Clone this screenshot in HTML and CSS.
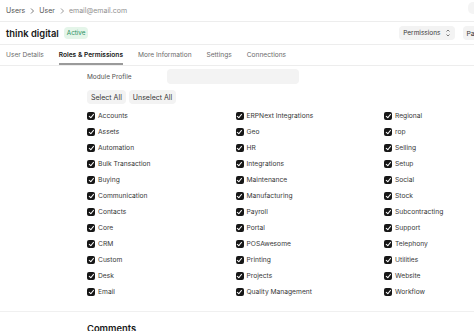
FILE: index.html
```html
<!DOCTYPE html>
<html>
<head>
<meta charset="utf-8">
<link rel="stylesheet" href="styles.css">
</head>
<body>
<div class="page">
<div class="topbar">
  <nav class="crumbs">
    <span class="crumb">Users</span>
    <svg class="chev" viewBox="0 0 6 8"><path d="M2 1.5 L4.5 4 L2 6.5" fill="none" stroke="#7c7c7c" stroke-width="1"/></svg>
    <span class="crumb">User</span>
    <svg class="chev" viewBox="0 0 6 8"><path d="M2 1.5 L4.5 4 L2 6.5" fill="none" stroke="#9a9a9a" stroke-width="1"/></svg>
    <span class="crumb light">email@email.com</span>
  </nav>
  <div class="top-pill"></div>
</div>
<div class="titlebar">
  <h1 class="title">think digital</h1>
  <span class="badge">Active</span>
  <div class="spacer"></div>
  <button class="btn">Permissions <svg class="updown" viewBox="0 0 6 10"><path d="M1.5 3.5 L3 2 L4.5 3.5 M1.5 6.5 L3 8 L4.5 6.5" fill="none" stroke="#6b6b6b" stroke-width="0.9"/></svg></button>
  <button class="btn">Password</button>
</div>
<div class="tabs">
  <span class="tab">User Details</span>
  <span class="tab active">Roles &amp; Permissions</span>
  <span class="tab">More Information</span>
  <span class="tab">Settings</span>
  <span class="tab">Connections</span>
</div>
<main class="content">
  <div class="field">
    <span class="label">Module Profile</span>
    <div class="input"></div>
  </div>
  <div class="actions">
    <button class="btn small">Select All</button>
    <button class="btn small">Unselect All</button>
  </div>
  <div class="grid">
    <div class="col">
      <label class="item"><span class="cb"></span>Accounts</label>
      <label class="item"><span class="cb"></span>Assets</label>
      <label class="item"><span class="cb"></span>Automation</label>
      <label class="item"><span class="cb"></span>Bulk Transaction</label>
      <label class="item"><span class="cb"></span>Buying</label>
      <label class="item"><span class="cb"></span>Communication</label>
      <label class="item"><span class="cb"></span>Contacts</label>
      <label class="item"><span class="cb"></span>Core</label>
      <label class="item"><span class="cb"></span>CRM</label>
      <label class="item"><span class="cb"></span>Custom</label>
      <label class="item"><span class="cb"></span>Desk</label>
      <label class="item"><span class="cb"></span>Email</label>
    </div>
    <div class="col">
      <label class="item"><span class="cb"></span>ERPNext Integrations</label>
      <label class="item"><span class="cb"></span>Geo</label>
      <label class="item"><span class="cb"></span>HR</label>
      <label class="item"><span class="cb"></span>Integrations</label>
      <label class="item"><span class="cb"></span>Maintenance</label>
      <label class="item"><span class="cb"></span>Manufacturing</label>
      <label class="item"><span class="cb"></span>Payroll</label>
      <label class="item"><span class="cb"></span>Portal</label>
      <label class="item"><span class="cb"></span>POSAwesome</label>
      <label class="item"><span class="cb"></span>Printing</label>
      <label class="item"><span class="cb"></span>Projects</label>
      <label class="item"><span class="cb"></span>Quality Management</label>
    </div>
    <div class="col">
      <label class="item"><span class="cb"></span>Regional</label>
      <label class="item"><span class="cb"></span>rop</label>
      <label class="item"><span class="cb"></span>Selling</label>
      <label class="item"><span class="cb"></span>Setup</label>
      <label class="item"><span class="cb"></span>Social</label>
      <label class="item"><span class="cb"></span>Stock</label>
      <label class="item"><span class="cb"></span>Subcontracting</label>
      <label class="item"><span class="cb"></span>Support</label>
      <label class="item"><span class="cb"></span>Telephony</label>
      <label class="item"><span class="cb"></span>Utilities</label>
      <label class="item"><span class="cb"></span>Website</label>
      <label class="item"><span class="cb"></span>Workflow</label>
    </div>
  </div>
</main>
<section class="comments">
  <h2 class="comments-title">Comments</h2>
</section>
</div>
</body>
</html>
```
FILE: styles.css
```css
* { box-sizing: border-box; }
html, body { margin: 0; padding: 0; }
body {
  width: 474px;
  height: 331px;
  overflow: hidden;
  background: #fff;
  font-family: Inter, "Noto Sans", sans-serif;
  color: #383838;
}
.page {
  width: 510px;
}
.topbar {
  height: 22px;
  display: flex;
  align-items: center;
  padding: 0 0 0 6px;
  border-bottom: 1px solid #ededed;
}
.crumbs {
  display: flex;
  align-items: center;
  gap: 3px;
  font-size: 7px;
  flex: 1;
}
.crumb { color: #525252; }
.crumb.light { color: #8f8f8f; }
.chev { width: 6px; height: 8px; margin: 0 1px; }
.top-pill {
  width: 30px;
  height: 12px;
  border-radius: 5px;
  background: #f4f4f4;
  margin-right: 12px;
  align-self: flex-start;
  margin-top: 2px;
}
.titlebar {
  height: 23px;
  display: flex;
  align-items: center;
  padding-left: 6px;
  border-bottom: 1px solid #ededed;
}
.title {
  margin: 0;
  font-size: 9.4px;
  font-weight: 600;
  color: #171717;
}
.badge {
  margin-left: 5px;
  font-size: 6.3px;
  background: #e4f5e9;
  color: #278f5e;
  padding: 2px 3px;
  border-radius: 4px;
}
.spacer { flex: 1; }
.btn {
  font-family: inherit;
  border: none;
  background: #f3f3f3;
  color: #383838;
  font-size: 6.8px;
  border-radius: 4px;
  height: 14px;
  padding: 0 4px;
  display: inline-flex;
  align-items: center;
  gap: 4px;
  white-space: nowrap;
}
.titlebar .btn { margin-right: 8px; flex-shrink: 0; }
.titlebar .btn:first-of-type { font-size: 6.5px; }
.updown { width: 6px; height: 10px; }
.tabs {
  height: 21px;
  display: flex;
  align-items: stretch;
  padding-left: 6px;
  gap: 15px;
  border-bottom: 1px solid #ededed;
  font-size: 6.6px;
}
.tab {
  display: flex;
  align-items: center;
  color: #6b6b6b;
  border-bottom: 2px solid transparent;
  padding-top: 1px;
}
.tab.active {
  color: #171717;
  font-weight: 600;
  border-bottom-color: #9a9a9a;
}
.content {
  padding: 3px 0 0 87px;
}
.field {
  display: flex;
  align-items: center;
  height: 15px;
}
.label {
  width: 80px;
  font-size: 6.5px;
  color: #525252;
}
.input {
  width: 132px;
  height: 15px;
  background: #f3f3f3;
  border-radius: 4px;
}
.actions {
  display: flex;
  gap: 3px;
  margin-top: 6px;
}
.btn.small { height: 14px; padding: 0 4px; font-size: 7px; }
.grid {
  display: grid;
  grid-template-columns: 148.5px 148.5px 148.5px;
  margin-top: 4px;
}
.col { display: flex; flex-direction: column; }
.item {
  height: 16px;
  display: flex;
  align-items: center;
  gap: 3px;
  font-size: 6.7px;
  color: #383838;
  white-space: nowrap;
}
.cb {
  width: 8px;
  height: 8px;
  border-radius: 2px;
  background: #171717;
  position: relative;
  flex-shrink: 0;
}
.cb::after {
  content: "";
  position: absolute;
  left: 2.6px;
  top: 1.4px;
  width: 2px;
  height: 3.6px;
  border: solid #fff;
  border-width: 0 1.1px 1.1px 0;
  transform: rotate(40deg);
}
.comments {
  margin-top: 11px;
  border-top: 1px solid #f0f0f0;
  padding: 11px 0 0 87px;
}
.comments-title {
  margin: 0;
  font-size: 9.4px;
  font-weight: 600;
  color: #171717;
}
```
